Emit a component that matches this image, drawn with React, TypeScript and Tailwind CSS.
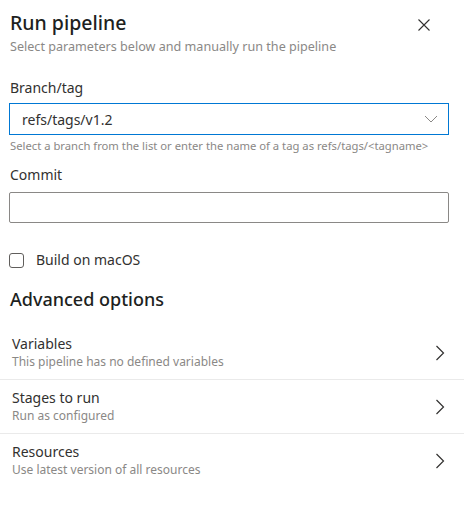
import React from "react";

function Chevron() {
  return (
    <svg width="10" height="16" viewBox="0 0 10 16" fill="none" className="shrink-0">
      <path d="M1.5 1 L8.5 8 L1.5 15" stroke="#323130" strokeWidth="1.2" />
    </svg>
  );
}

function Item({ title, sub, last }: { title: string; sub: string; last?: boolean }) {
  return (
    <div
      className={
        "flex items-center justify-between pl-[12px] pr-[19px] h-[54px] " +
        (last ? "" : "border-b border-[#eaeaea]")
      }
    >
      <div className="flex flex-col">
        <span className="text-[14px] leading-[18px] text-[#323130]">{title}</span>
        <span className="text-[12px] leading-[18px] text-[#8a8886]">{sub}</span>
      </div>
      <Chevron />
    </div>
  );
}

export default function App() {
  return (
    <div
      className="w-[464px] h-[509px] bg-white overflow-hidden"
      style={{ fontFamily: '"Noto Sans", "Open Sans", sans-serif' }}
    >
      <div className="pl-[9px] pr-[15px]">
        <div className="flex items-start justify-between pt-[10px]">
          <div className="pl-[1px]">
            <div className="text-[19.5px] leading-[26px] font-medium text-[#201f1e]">Run pipeline</div>
            <div className="text-[12.6px] leading-[20px] text-[#8a8886] mt-[1px]">
              Select parameters below and manually run the pipeline
            </div>
          </div>
          <svg width="12" height="12" viewBox="0 0 12 12" className="mt-[9px] mr-[19px]">
            <path d="M0.5 0.5 L11.5 11.5 M11.5 0.5 L0.5 11.5" stroke="#323130" strokeWidth="1.1" />
          </svg>
        </div>

        <div className="mt-[21px] pl-[1px] text-[14px] leading-[20px] text-[#323130]">Branch/tag</div>
        <div className="mt-[5px] h-[32px] border border-[#0078d4] flex items-center justify-between pl-[12px] pr-[10px]">
          <span className="text-[14px] text-[#323130]">refs/tags/v1.2</span>
          <svg width="14" height="8" viewBox="0 0 14 8" fill="none">
            <path d="M1 1 L7 7 L13 1" stroke="#8a8886" strokeWidth="1" />
          </svg>
        </div>
        <div className="mt-[3px] text-[11.25px] leading-[16px] text-[#8a8886] pl-[1px]">
          Select a branch from the list or enter the name of a tag as refs/tags/&lt;tagname&gt;
        </div>

        <div className="mt-[11px] pl-[1px] text-[14px] leading-[20px] text-[#323130]">Commit</div>
        <div className="mt-[7px] h-[31px] border border-[#8a8886] rounded-[2px]"></div>

        <div className="mt-[27px] flex items-center gap-[12px]">
          <div className="w-[15px] h-[15px] border border-[#605e5c] rounded-[3px]"></div>
          <span className="text-[14px] leading-[20px] text-[#323130]">Build on macOS</span>
        </div>

        <div className="mt-[17px] pl-[1px] text-[18px] leading-[24px] font-medium text-[#201f1e]">Advanced options</div>
      </div>

      <div className="mt-[15px]">
        <Item title="Variables" sub="This pipeline has no defined variables" />
        <Item title="Stages to run" sub="Run as configured" />
        <Item title="Resources" sub="Use latest version of all resources" last />
      </div>
    </div>
  );
}
